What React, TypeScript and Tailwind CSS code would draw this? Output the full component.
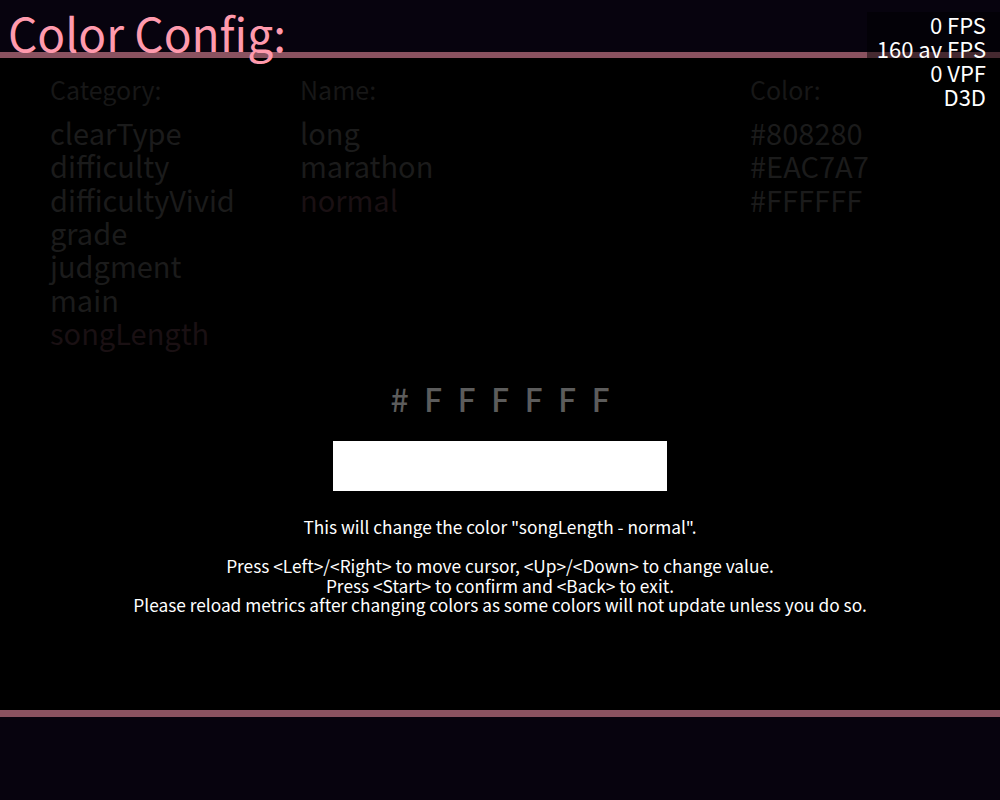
import React from 'react';

const font = { fontFamily: '"Noto Sans CJK JP", "Noto Sans", sans-serif' };

const categories = ['clearType', 'difficulty', 'difficultyVivid', 'grade', 'judgment', 'main', 'songLength'];
const names = ['long', 'marathon', 'normal'];
const colors = ['#808280', '#EAC7A7', '#FFFFFF'];
const hex = ['#', 'F', 'F', 'F', 'F', 'F', 'F'];

const Column: React.FC<{ title: string; items: string[]; selected?: number }> = ({ title, items, selected }) => (
  <div className="flex flex-col">
    <div className="text-[25px] leading-[30px] text-[#171717]">{title}</div>
    <div className="mt-[12px] flex flex-col">
      {items.map((it, i) => (
        <div key={it} className={`text-[29px] leading-[33.33px] ${i === selected ? 'text-[#1a1013]' : 'text-[#1b1b1b]'}`}>{it}</div>
      ))}
    </div>
  </div>
);

export default function App() {
  return (
    <div className="relative w-[1000px] h-[800px] bg-black flex flex-col overflow-hidden" style={font}>
      <header className="h-[52px] bg-[#07030e] relative z-10">
        <div className="pl-[8px] pt-[6px] text-[46px] leading-[52px] text-[#ff9aad] whitespace-nowrap">Color Config:</div>
      </header>
      <div className="h-[6px] bg-[#8a5260]" />
      <main className="flex-1 flex flex-col">
        <div className="grid grid-cols-[250px_450px_1fr] pl-[50px] pt-[16px]">
          <Column title="Category:" items={categories} selected={6} />
          <Column title="Name:" items={names} selected={2} />
          <Column title="Color:" items={colors} />
        </div>
        <div className="mt-[29px] flex justify-center font-medium">
          {hex.map((c, i) => (
            <span key={i} className="w-[33.5px] text-center text-[32px] leading-[40px] text-[#5c5c5c]">{c}</span>
          ))}
        </div>
        <div className="mt-[23px] mx-auto w-[334px] h-[50px] bg-white" />
        <p className="mt-[26px] text-center text-white text-[17.3px] leading-[19.5px] whitespace-pre-line">
          {'This will change the color "songLength - normal".\n\nPress <Left>/<Right> to move cursor, <Up>/<Down> to change value.\nPress <Start> to confirm and <Back> to exit.\nPlease reload metrics after changing colors as some colors will not update unless you do so.'}
        </p>
      </main>
      <div className="h-[7px] bg-[#8a5260]" />
      <footer className="h-[83px] bg-[#07030e]" />
      <div className="absolute top-[12px] right-0 w-[133px] bg-black/50 pr-[14px] z-20 flex flex-col items-end text-white text-[22px] leading-[24px]">
        <span>0 FPS</span>
        <span>160 av FPS</span>
        <span>0 VPF</span>
        <span>D3D</span>
      </div>
    </div>
  );
}
